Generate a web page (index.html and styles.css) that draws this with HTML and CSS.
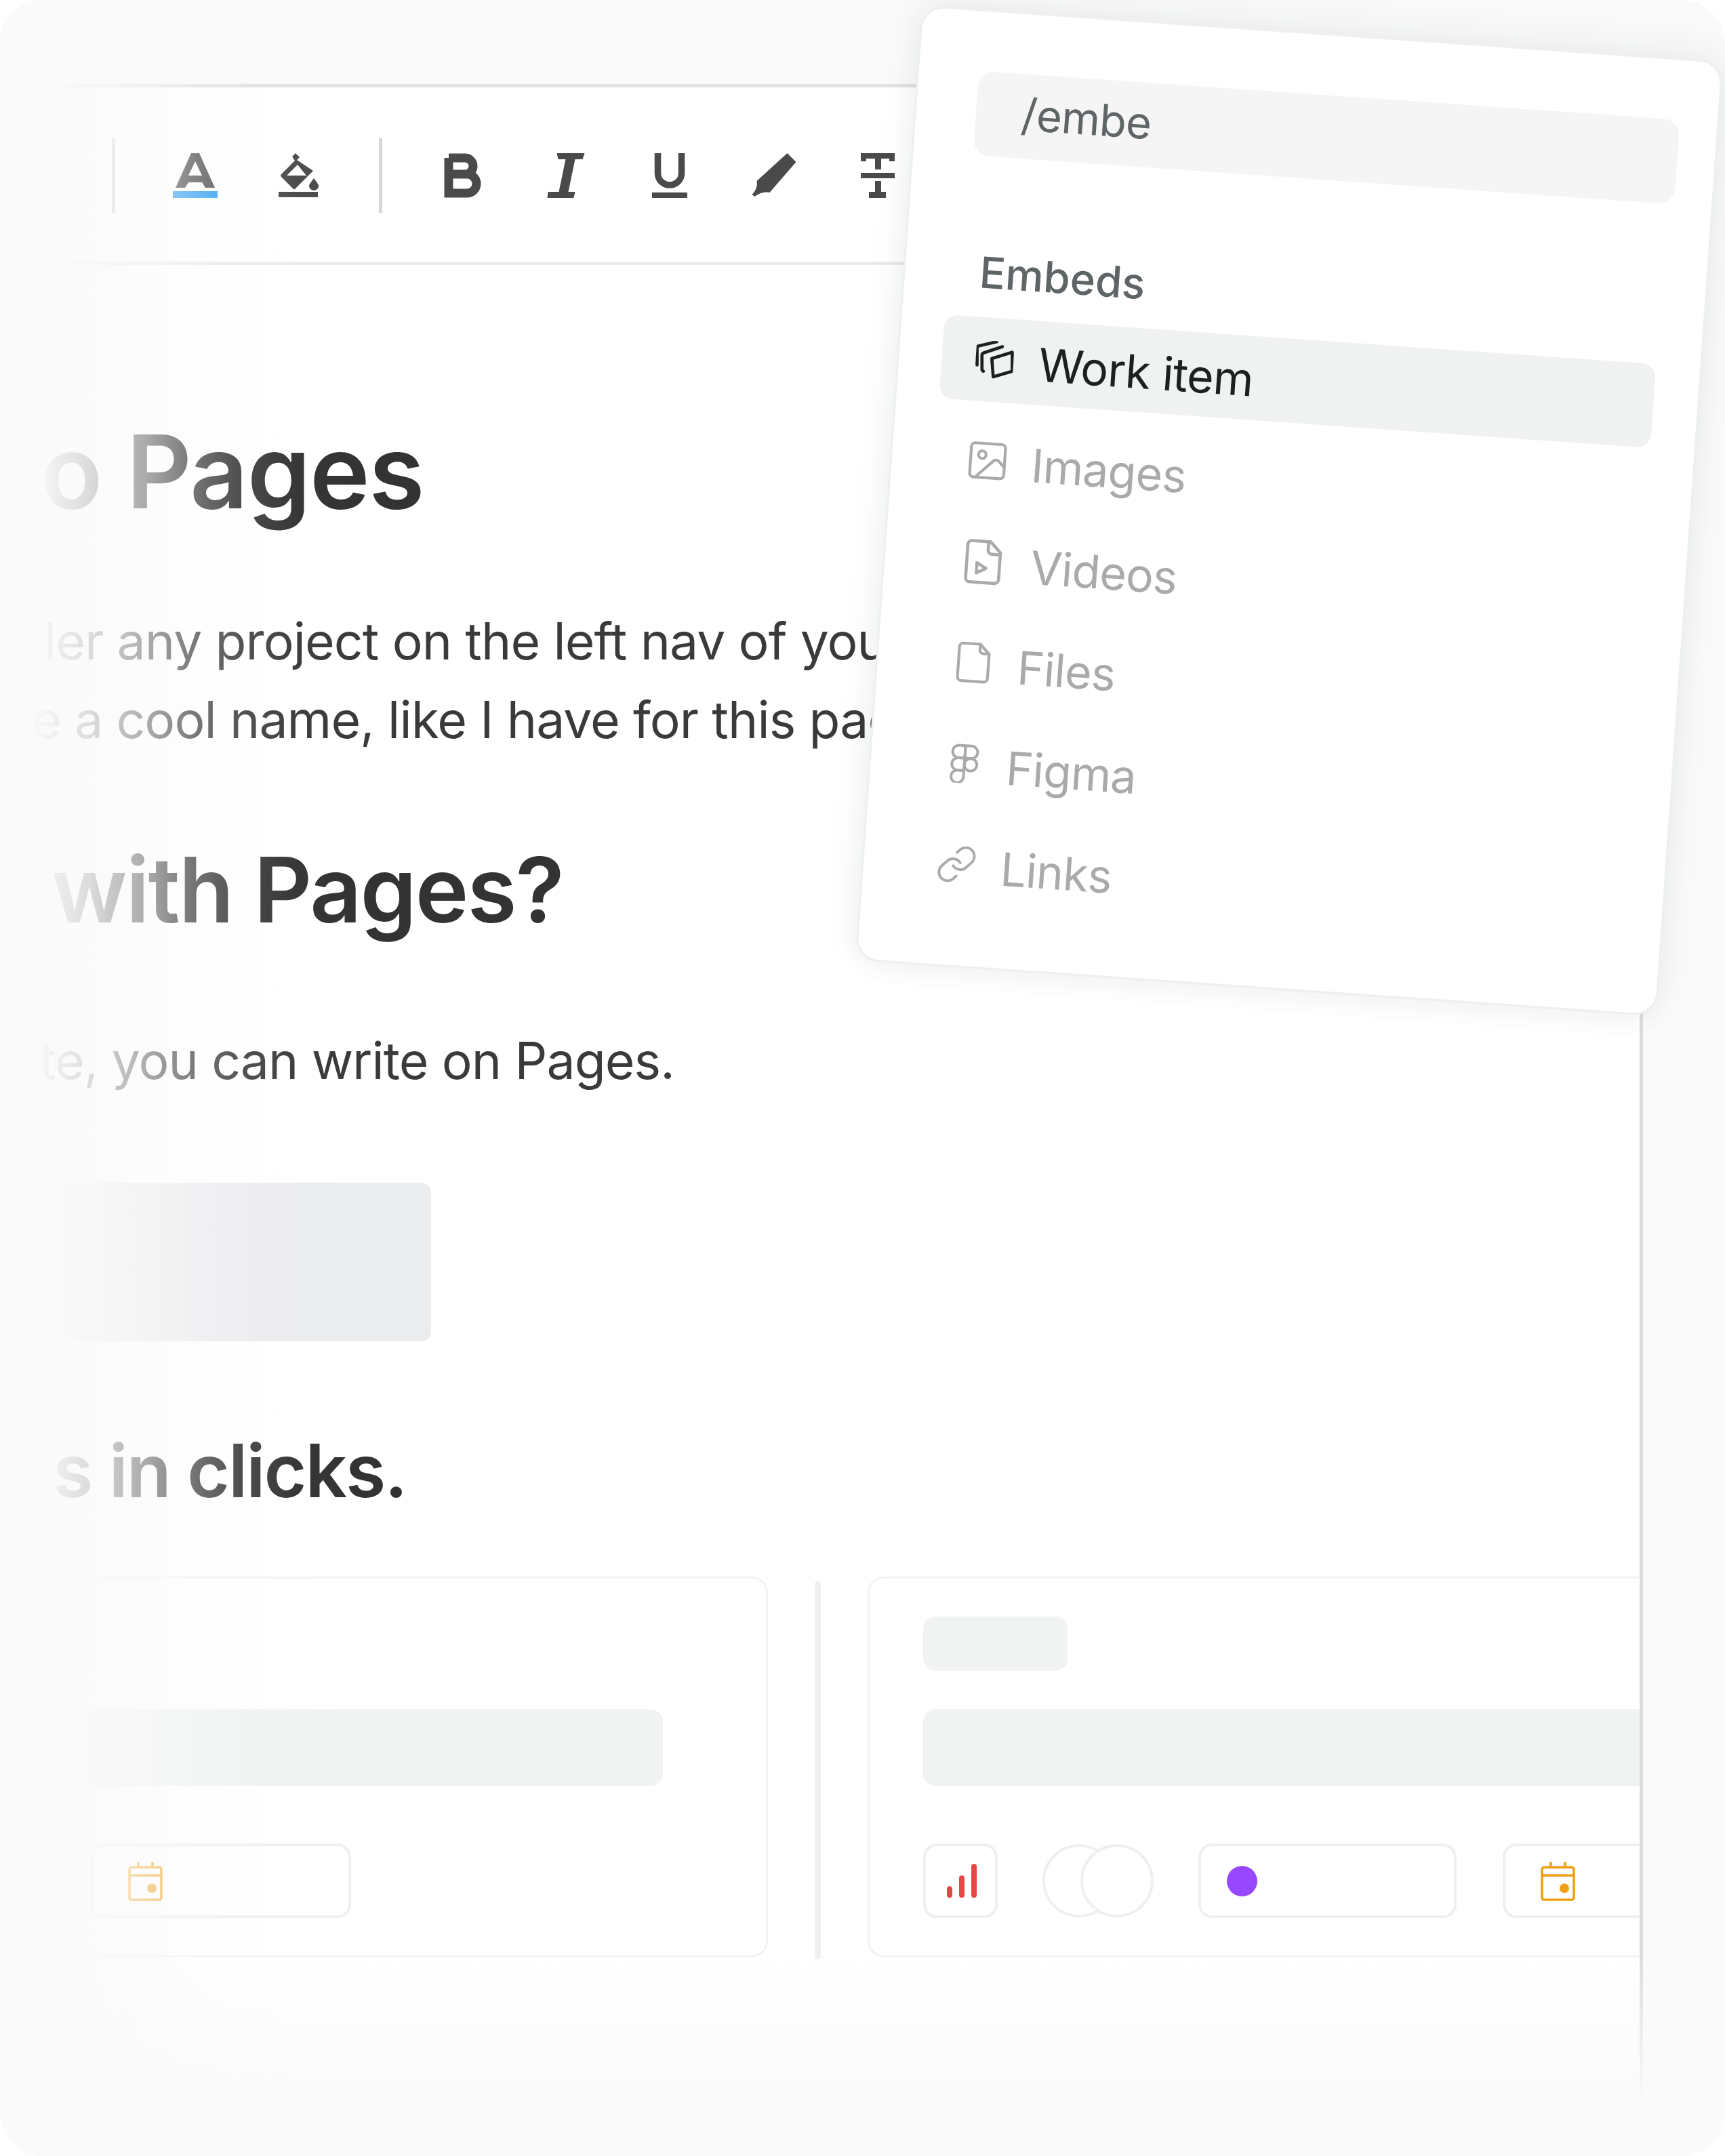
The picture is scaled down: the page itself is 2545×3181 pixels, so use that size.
FILE: index.html
```html
<!DOCTYPE html>
<html>
<head>
	<title>Pages</title>
	<meta charset="UTF-8">
	<link rel="stylesheet" href="styles.css">
</head>
<body>
<div class="frame">
	<div class="editor">
		<div class="toolbar">
			<span class="sep sep-faint"></span>
			<svg class="tool" viewBox="-3 -3 72 72"><path fill-rule="evenodd" d="M27 0H39L62 51H48L43 43H23L18 51H4ZM33 12L23 33H43Z"/><rect class="tool-blue" x="0" y="56" width="66" height="10"/></svg>
			<svg class="tool" viewBox="-6 -3 72 72"><path d="M25 0L31 6L27 10L51 26L24 53Q23 54 21 52L4 35Q2 33 4 31L24 11L20 5ZM12 33H41L28 17Z" fill-rule="evenodd"/><path d="M52 37Q59 46 59 48A7 7 0 0 1 45 48Q45 46 52 37Z"/><rect x="0" y="57" width="58" height="8"/></svg>
			<span class="sep"></span>
			<svg class="tool" viewBox="-10 -3 72 72"><path class="tool-line" stroke-width="13" d="M7 7H31A12 12 0 0 1 31 31H7M7 31H34A14 14 0 0 1 34 59H7V7"/></svg>
			<svg class="tool" viewBox="-8.500 -3 72 72"><path d="M14 0H55L52 9H16ZM1 57H41L39 66H0ZM27 9H41L31 57H17Z"/></svg>
			<svg class="tool" viewBox="-10 -3 72 72"><path class="tool-line" stroke-width="9.500" d="M8.500 0V30A17.500 17 0 0 0 43.500 30V0"/><rect x="0" y="58" width="52" height="8"/></svg>
			<svg class="tool" viewBox="-3.500 -3 72 72"><path d="M52 0L65 13L26 58Q15 56 4 64L0 61Q9 52 7 41Z"/></svg>
			<svg class="tool" viewBox="-11 -3 72 72"><path d="M0 0H50V12H42V8H30V24H21V8H8V12H0ZM0 29H50V37H0ZM21 41H30V57H37V66H12V57H21Z"/></svg>
		</div>
		<div class="doc">
			<h1 class="title">o Pages</h1>
			<p class="para first">ler any project on the left nav of your</p>
			<p class="para second">e a cool name, like I have for this page</p>
			<h2 class="sub">with Pages?</h2>
			<p class="para short">te, you can write on Pages.</p>
			<div class="block"></div>
			<h3 class="small">s in clicks.</h3>
			<div class="cards">
				<div class="card card-left">
					<div class="bar bar-left"></div>
					<div class="chips">
						<div class="chip chip-wide">
							<svg class="cal" viewBox="0 0 51 59"><rect x="2" y="9" width="47" height="48" rx="3"/><path d="M2 21H49M15 1V9M36 1V9"/><circle cx="35" cy="40" r="7"/></svg>
						</div>
					</div>
				</div>
				<span class="divider"></span>
				<div class="card card-right">
					<div class="pill"></div>
					<div class="bar"></div>
					<div class="chips">
						<div class="chip chip-square">
							<svg class="bars" viewBox="0 0 44 50"><path d="M4 37V46M22 21V46M40 4V46"/></svg>
						</div>
						<div class="avatars"><span class="avatar"></span><span class="avatar"></span></div>
						<div class="chip chip-state"><span class="dot"></span></div>
						<div class="chip chip-wide">
							<svg class="cal" viewBox="0 0 51 59"><rect x="2" y="9" width="47" height="48" rx="3"/><path d="M2 21H49M15 1V9M36 1V9"/><circle cx="35" cy="40" r="7"/></svg>
						</div>
					</div>
				</div>
			</div>
		</div>
	</div>
	<div class="fade-left"></div>
	<div class="fade-bottom"></div>
	<div class="menu">
		<div class="search">/embe</div>
		<div class="menu-label">Embeds</div>
		<div class="items">
			<div class="item active">
				<svg class="ico ico-stack" viewBox="0 0 54 54"><g transform="rotate(-4 27 27)"><path d="M23 25L52 16V43L25 51Z"/><path d="M11 43Q9 42 9 40V20Q9 18 11 17L38 8"/><path d="M2 34V10Q2 8 4 7L30 1"/></g></svg>
				<span>Work item</span>
			</div>
			<div class="item">
				<svg class="ico" viewBox="2 2 20 20"><rect x="3" y="3" width="18" height="18" rx="2"/><circle cx="9" cy="9" r="2"/><path d="M21 15l-3.086-3.086a2 2 0 0 0-2.828 0L6 21"/></svg>
				<span>Images</span>
			</div>
			<div class="item item-video">
				<svg class="ico ico-tall" viewBox="3 1 18 22"><path d="M15 2H6a2 2 0 0 0-2 2v16a2 2 0 0 0 2 2h12a2 2 0 0 0 2-2V7Z"/><path d="M14 2v4a2 2 0 0 0 2 2h4"/><path d="M9 12.500v5l4.500-2.500Z"/></svg>
				<span>Videos</span>
			</div>
			<div class="item">
				<svg class="ico ico-file" viewBox="3 1 18 22"><path d="M15 2H6a2 2 0 0 0-2 2v16a2 2 0 0 0 2 2h12a2 2 0 0 0 2-2V7Z"/><path d="M15 2v3a2 2 0 0 0 2 2h3"/></svg>
				<span>Files</span>
			</div>
			<div class="item">
				<svg class="ico ico-figma" viewBox="4 1 16 22"><path d="M5 5.500A3.500 3.500 0 0 1 8.500 2H12v7H8.500A3.500 3.500 0 0 1 5 5.500z"/><path d="M12 2h3.500a3.500 3.500 0 1 1 0 7H12V2z"/><path d="M12 12.500a3.500 3.500 0 1 1 7 0 3.500 3.500 0 1 1-7 0z"/><path d="M5 19.500A3.500 3.500 0 0 1 8.500 16H12v3.500a3.500 3.500 0 1 1-7 0z"/><path d="M5 12.500A3.500 3.500 0 0 1 8.500 9H12v7H8.500A3.500 3.500 0 0 1 5 12.500z"/></svg>
				<span>Figma</span>
			</div>
			<div class="item item-link">
				<svg class="ico" viewBox="1 1 22 22"><path d="M10 13a5 5 0 0 0 7.540.540l3-3a5 5 0 0 0-7.070-7.070l-1.720 1.710"/><path d="M14 11a5 5 0 0 0-7.540-.540l-3 3a5 5 0 0 0 7.070 7.070l1.710-1.710"/></svg>
				<span>Links</span>
			</div>
		</div>
	</div>
</div>
</body>
</html>
```

FILE: styles.css
```css
html, body { margin: 0; padding: 0; background: #fff; }
body { width: 2545px; height: 3181px; font-family: "Inter", "Noto Sans", sans-serif; color: #333; }

.frame { position: relative; width: 2545px; height: 3181px; padding-top: 124px; box-sizing: border-box; border-radius: 64px; background: #fafafa; overflow: hidden; }

.editor { width: 2424px; height: 3057px; box-sizing: border-box; background: #fff; border-top: 5px solid #e1e2e2; border-right: 5px solid #dcdede; overflow: hidden; }

.toolbar { display: flex; align-items: center; gap: 81.500px; height: 262px; box-sizing: border-box; padding: 3px 0 0 165px; border-bottom: 5px solid #eaebeb; }
.sep { width: 5px; height: 110px; background: #d6d7d7; }
.sep-faint { background: #c4c5c5; }
.tool { flex: none; width: 72px; height: 72px; fill: #4a4a4a; }
.tool-blue { fill: #2d9cf2; }
.tool-line { fill: none; stroke: #4a4a4a; }

.doc { padding-top: 215px; }
.title, .sub, .small, .para { margin: 0; font-weight: 600; white-space: nowrap; }
.title { padding-left: 60px; font-size: 150px; line-height: 180px; letter-spacing: -1.500px; }
.para { padding-left: 65px; font-size: 75px; font-weight: 400; line-height: 116px; letter-spacing: -.9px; color: #3a3a3a; }
.para.first { margin-top: 102px; }
.para.second { padding-left: 47px; }
.para.short { margin-top: 114px; padding-left: 58px; }
.sub { margin-top: 113px; padding-left: 76px; font-size: 133px; line-height: 160px; letter-spacing: -2px; }
.small { margin-top: 121px; padding-left: 78px; font-size: 108px; line-height: 140px; letter-spacing: -2px; }

.block { width: 636px; height: 234px; margin-top: 122px; border-radius: 0 14px 14px 0; background: #ebecee; }

.cards { display: flex; align-items: flex-start; gap: 69px; margin-top: 86px; padding-left: 60px; }
.card { box-sizing: border-box; height: 562px; border: 3px solid #f1f2f2; border-radius: 24px; }
.card-left { flex: 0 0 1073px; padding-top: 193px; }
.card-right { flex: 0 0 1300px; padding: 56px 0 0 79px; }
.divider { flex: 0 0 9px; height: 558px; margin-top: 7px; border-radius: 5px; background: #eff0f0; }
.pill { width: 213px; height: 80px; border-radius: 18px; background: #f1f3f3; }
.bar { height: 113px; margin-top: 57px; border-radius: 18px; background: #f1f3f3; }
.bar-left { width: 915px; margin-top: 0; }
.chips { display: flex; align-items: center; margin-top: 85px; }
.card-left .chips { padding-left: 70px; }
.chip { display: flex; align-items: center; justify-content: center; box-sizing: border-box; height: 110px; flex: none; border: 4px solid #eef0f0; border-radius: 20px; background: #fff; }
.chip-square { width: 110px; padding-left: 4px; }
.chip-state { width: 381px; justify-content: flex-start; padding-left: 38px; margin-left: 66px; }
.chip-wide { width: 385px; justify-content: flex-start; padding-left: 52px; }
.card-right .chip-wide { margin-left: 68px; }
.dot { width: 45px; height: 45px; border-radius: 50%; background: #9747ff; }
.avatars { display: flex; margin-left: 66px; }
.avatar { width: 108px; height: 108px; box-sizing: border-box; border: 4px solid #eef0f0; border-radius: 50%; background: #fff; }
.avatar + .avatar { margin-left: -52px; }
.cal { width: 51px; height: 59px; fill: none; stroke: #ee9f14; stroke-width: 3.500; }
.cal circle { fill: #ee9f14; stroke: none; }
.bars { width: 44px; height: 50px; fill: none; stroke: #e84545; stroke-width: 8; stroke-linecap: round; }

.fade-left { position: absolute; left: 0; top: 0; width: 520px; height: 100%; background: linear-gradient(90deg, rgba(250,250,250,1) 0, rgba(250,250,250,.98) 60px, rgba(250,250,250,.85) 130px, rgba(250,250,250,.6) 215px, rgba(250,250,250,.32) 288px, rgba(250,250,250,.12) 360px, rgba(250,250,250,.02) 440px, rgba(250,250,250,0) 100%); }
.fade-bottom { position: absolute; left: 0; bottom: 0; width: 100%; height: 300px; background: linear-gradient(180deg, rgba(250,250,250,0) 0, rgba(250,250,250,1) 76%); }

.menu { position: absolute; left: 1312px; top: 50px; width: 1180px; height: 1407px; box-sizing: border-box; padding: 88px 65px 0 63px; border-radius: 32px; background: #fff; transform: rotate(4deg); box-shadow: 0 0 0 3px #eef0f0, 0 -12px 60px rgba(30,40,40,.07), 0 10px 40px rgba(30,40,40,.04); }
.search { height: 125px; margin: 0 -10px 0 25px; padding-left: 67px; border-radius: 24px; background: #f5f5f5; font-size: 65px; line-height: 119px; letter-spacing: -.8px; color: #5f6466; }
.menu-label { margin: 136px 0 0 47px; font-size: 63.500px; font-weight: 500; line-height: 70px; color: #5f6466; }
.items { display: flex; flex-direction: column; gap: 25.300px; margin-top: 31px; }
.item { display: flex; align-items: center; gap: 37px; height: 124px; padding-left: 50px; border-radius: 20px; font-size: 68px; letter-spacing: -.8px; color: #aaa; }
.item span { padding-top: 4px; }
.item.active { background: #f0f2f2; color: #1d1f20; }
.item-video { gap: 42px; padding-left: 54px; }
.item-link { padding-left: 46px; }
.ico { flex: none; width: 56px; height: 56px; fill: none; stroke: currentColor; stroke-width: 1.500; stroke-linecap: round; stroke-linejoin: round; }
.ico-stack { stroke-width: 4.500; }
.ico-tall { height: 67px; }
.ico-file { height: 61px; }
.ico-figma { width: 50px; height: 58px; }
```
